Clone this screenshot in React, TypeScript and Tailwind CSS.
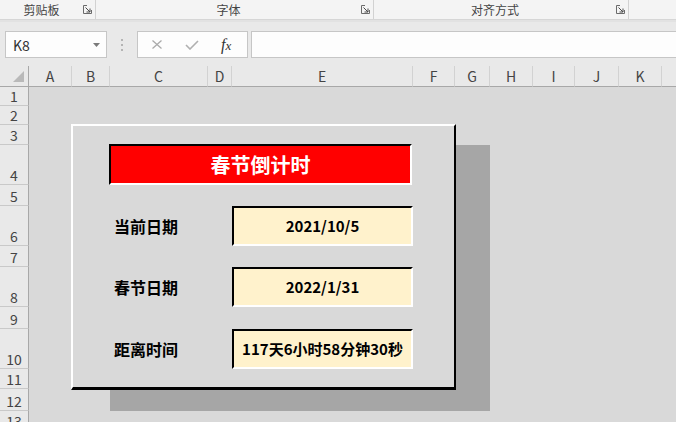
const FONT = "font-['Noto_Sans_CJK_SC','Noto_Sans',sans-serif]";

const columns = [
  { name: 'A', w: 43 },
  { name: 'B', w: 38 },
  { name: 'C', w: 98 },
  { name: 'D', w: 24 },
  { name: 'E', w: 181 },
  { name: 'F', w: 42 },
  { name: 'G', w: 35 },
  { name: 'H', w: 43 },
  { name: 'I', w: 42 },
  { name: 'J', w: 44 },
  { name: 'K', w: 43 },
  { name: '', w: 60 },
];

const rowHeights = [19, 19, 20, 40, 21, 40, 21, 40, 22, 40, 20, 22, 20];

function Launcher() {
  return (
    <svg width="9" height="9" viewBox="0 0 9 9" className="shrink-0">
      <path d="M0.5 4 V0.5 H4" fill="none" stroke="#6b6b6b" strokeWidth="1" />
      <path d="M0.5 4 V8.5 H8.5 V5" fill="none" stroke="#6b6b6b" strokeWidth="1" />
      <path d="M2.5 2.5 L7 7 M7 3.5 V7 H3.5" fill="none" stroke="#4a4a4a" strokeWidth="1" />
    </svg>
  );
}

function RibbonGroup({ label, width }: { label: string; width: string }) {
  return (
    <div className={`${width} h-full flex items-center border-r border-[#d2d2d2] pr-[3px]`}>
      <span className="flex-1 text-center text-[12px] text-[#444] leading-none">{label}</span>
      <Launcher />
    </div>
  );
}

function ValueRow({ label, value, className }: { label: string; value: string; className: string }) {
  return (
    <div className={`flex items-center ${className}`}>
      <div className="w-[123px] pl-[5px] text-[16px] font-bold text-black leading-none">{label}</div>
      <div className="w-[181px] h-[40px] bg-[#fff2cc] border-t-2 border-l-2 border-black border-r-2 border-b-2 border-r-white border-b-white flex items-center justify-center text-[15px] font-bold text-black">
        {value}
      </div>
    </div>
  );
}

export default function App() {
  return (
    <div className={`w-[676px] h-[422px] overflow-hidden bg-[#d9d9d9] ${FONT}`}>
      {/* ribbon group labels */}
      <div className="h-[20px] flex bg-[#f4f4f4] border-b border-[#d6d6d6]">
        <RibbonGroup label="剪贴板" width="w-[96px]" />
        <RibbonGroup label="字体" width="w-[278px]" />
        <RibbonGroup label="对齐方式" width="w-[255px]" />
        <div className="flex-1" />
      </div>

      {/* formula bar */}
      <div className="h-[46px] bg-[#e9e9e9] flex items-start pt-[9px] pl-[5px] border-t-2 border-[#e2e2e2]">
        <div className="w-[102px] h-[27px] bg-[#fdfdfd] border border-[#c6c6c6] flex items-center justify-between pl-[7px] pr-[6px]">
          <span className="text-[14px] text-[#333] leading-none">K8</span>
          <svg width="7" height="4" viewBox="0 0 7 4">
            <path d="M0 0 H7 L3.5 4 Z" fill="#7a7a7a" />
          </svg>
        </div>
        <div className="w-[30px] h-[27px] flex flex-col items-center justify-center gap-[3px]">
          <span className="w-[2px] h-[2px] bg-[#b4b4b4]" />
          <span className="w-[2px] h-[2px] bg-[#b4b4b4]" />
          <span className="w-[2px] h-[2px] bg-[#b4b4b4]" />
        </div>
        <div className="w-[111px] h-[27px] bg-[#fdfdfd] border border-[#c6c6c6] flex items-center pl-[13px] gap-[22px]">
          <svg width="12" height="9" viewBox="0 0 12 9">
            <path d="M1.5 0.5 L10.5 8.5 M10.5 0.5 L1.5 8.5" stroke="#aaaaaa" strokeWidth="1.3" />
          </svg>
          <svg width="14" height="10" viewBox="0 0 14 10">
            <path d="M1 5 L5 9 L13 1" fill="none" stroke="#b0b0b0" strokeWidth="1.6" />
          </svg>
          <span className="font-['Liberation_Serif',serif] italic text-[16px] text-[#333] leading-none">
            f<span className="text-[13px]">x</span>
          </span>
        </div>
        <div className="flex-1 h-[27px] ml-[3px] bg-[#fdfdfd] border border-[#c6c6c6] border-r-0" />
      </div>

      {/* sheet */}
      <div className="relative">
        <div className="grid grid-cols-[29px_43px_38px_98px_24px_181px_42px_35px_43px_42px_44px_43px_60px] grid-rows-[21px_19px_19px_20px_40px_21px_40px_21px_40px_22px_40px_20px_22px_20px]">
          <div className="bg-[#e9e9e9] border-r border-b border-[#a8a8a8] flex items-end justify-end pr-[4px] pb-[4px]">
            <svg width="11" height="11" viewBox="0 0 11 11">
              <path d="M11 0 V11 H0 Z" fill="#b9b9b9" />
            </svg>
          </div>
          {columns.map((c, i) => (
            <div
              key={i}
              className="bg-[#e9e9e9] border-r border-[#d2d2d2] border-b border-b-[#a8a8a8] flex items-center justify-center text-[14px] text-[#444] leading-none"
            >
              {c.name}
            </div>
          ))}

          {rowHeights.map((_, i) => (
            <div
              key={i}
              className="col-start-1 bg-[#e9e9e9] border-b border-[#c9c9c9] border-r border-r-[#a8a8a8] flex items-end justify-center text-[14px] text-[#444] leading-[18px]"
              style={{ gridRowStart: i + 2 }}
            >
              {i + 1}
            </div>
          ))}

          <div className="col-start-4 col-end-9 row-start-5 row-end-14 bg-[#a6a6a6]" />
        </div>

        {/* countdown panel */}
        <div className="absolute left-[71px] top-[58px] w-[385px] h-[266px] bg-[#d9d9d9] border-t-2 border-l-2 border-white border-r-2 border-b-[3px] border-r-black border-b-black pl-[36px] pt-[18px] flex flex-col">
          <div className="w-[303px] h-[41px] bg-[#ff0000] border-t-2 border-l-2 border-black border-r-2 border-b-2 border-r-white border-b-white flex items-center justify-center text-white text-[20px] font-bold">
            春节倒计时
          </div>
          <ValueRow label="当前日期" value="2021/10/5" className="mt-[21px]" />
          <ValueRow label="春节日期" value="2022/1/31" className="mt-[21px]" />
          <ValueRow label="距离时间" value="117天6小时58分钟30秒" className="mt-[22px]" />
        </div>
      </div>
    </div>
  );
}
